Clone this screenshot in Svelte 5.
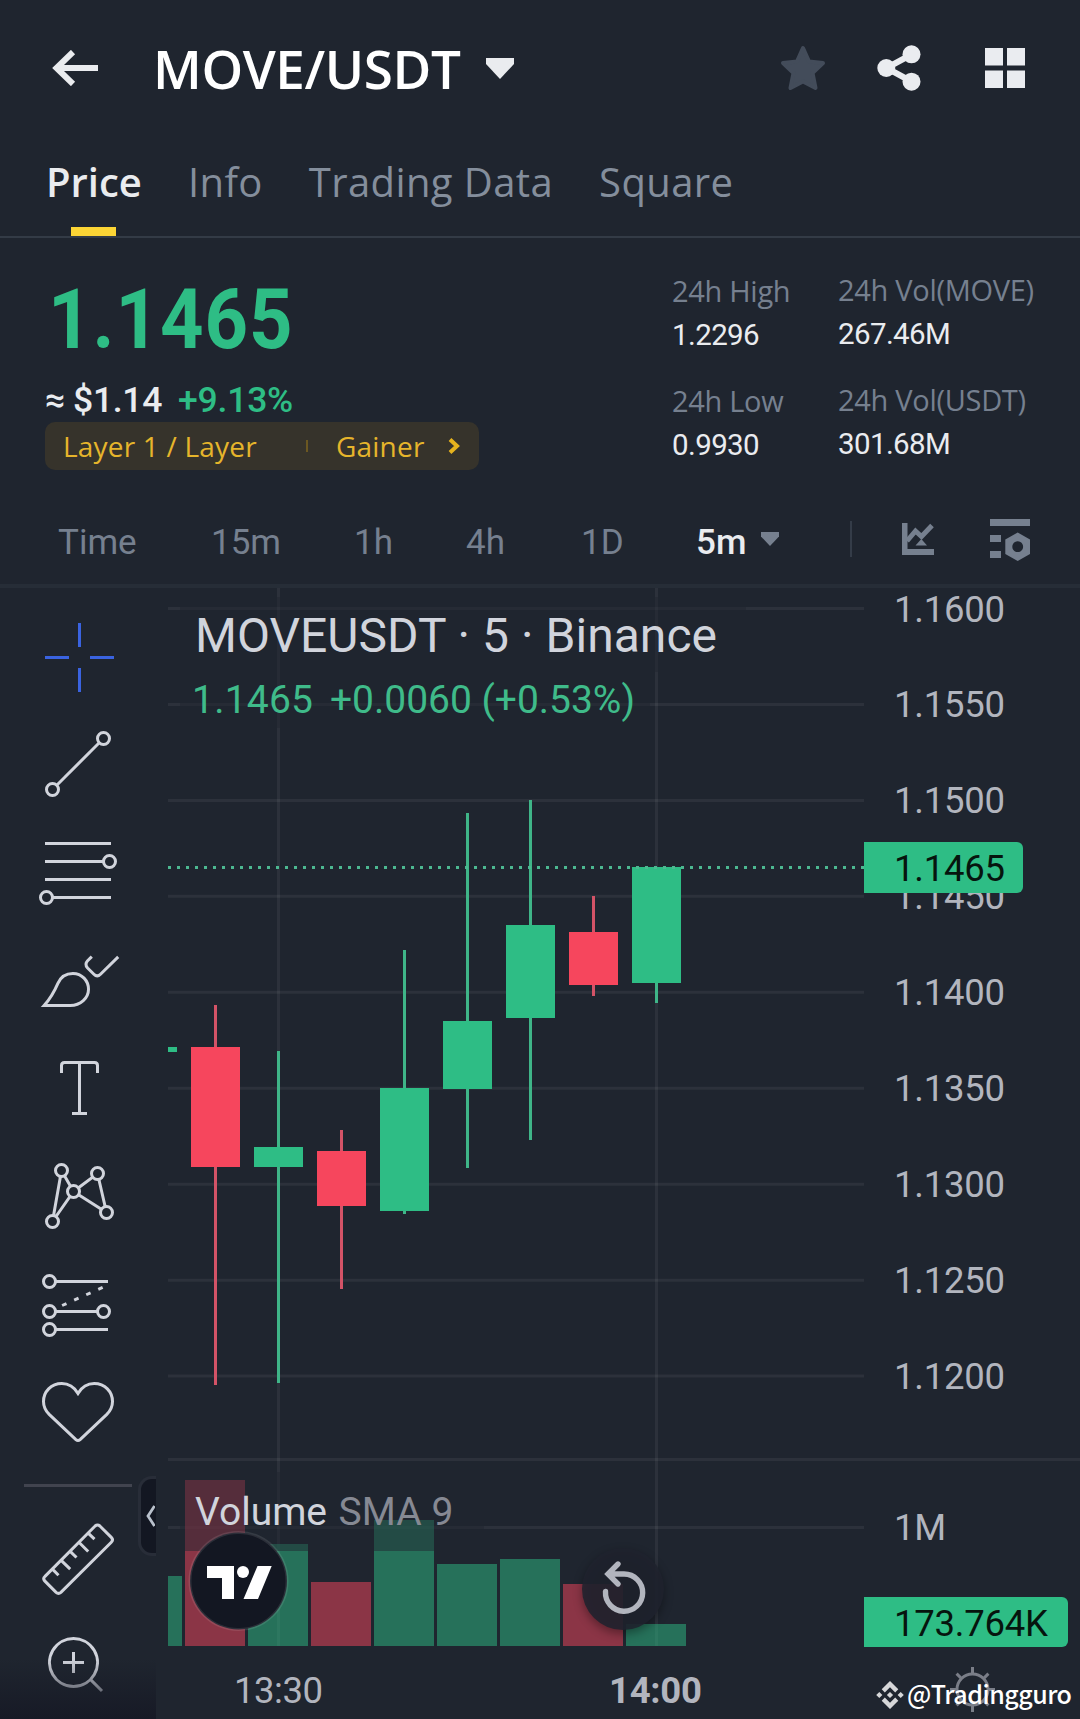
<script lang="ts">
  type Candle = { high: number; top: number; bottom: number; low: number; up: boolean; volume: number };

  const tabs = ['Price', 'Info', 'Trading Data', 'Square'];
  let activeTab = 'Price';

  const stats = [
    [
      { label: '24h High', value: '1.2296' },
      { label: '24h Low', value: '0.9930' }
    ],
    [
      { label: '24h Vol(MOVE)', value: '267.46M' },
      { label: '24h Vol(USDT)', value: '301.68M' }
    ]
  ];

  const intervals = ['Time', '15m', '1h', '4h', '1D'];

  const priceLabels = ['1.1600', '1.1550', '1.1500', '1.1450', '1.1400', '1.1350', '1.1300', '1.1250', '1.1200'];
  const gridTop = 608.5;
  const gridStep = 95.95;

  // y positions on the chart canvas
  const candles: Candle[] = [
    { high: 1005, top: 1047, bottom: 1167, low: 1385, up: false, volume: 1480 },
    { high: 1051, top: 1147, bottom: 1167, low: 1383, up: true, volume: 1544 },
    { high: 1130, top: 1151, bottom: 1206, low: 1289, up: false, volume: 1582 },
    { high: 950, top: 1088, bottom: 1211, low: 1214, up: true, volume: 1520 },
    { high: 813, top: 1021, bottom: 1089, low: 1168, up: true, volume: 1564 },
    { high: 800, top: 925, bottom: 1018, low: 1140, up: true, volume: 1559 },
    { high: 896, top: 932, bottom: 985, low: 996, up: false, volume: 1584 },
    { high: 867, top: 867, bottom: 983, low: 1003, up: true, volume: 1624 }
  ];
  const volumeBase = 1646;

  $: bars = candles.map((c, i) => ({ ...c, x: 215.5 + i * 63 }));

  // Drawing tools, 28x28 grid
  type Tool = { name: string; path: string; dots?: number[][]; dashed?: string };
  const tools: Tool[] = [
    { name: 'cross', path: 'M14.5 3v8M14.5 18v8M3 14.5h8M18 14.5h8' },
    { name: 'trend', path: 'M5.5 22.5l17-17', dots: [[5.5, 22.5], [22.5, 5.5]] },
    { name: 'fib', path: 'M3 4.5h22M3 10.5h21M3 16.5h22M4 22.5h21', dots: [[24.5, 10.5], [3.5, 22.5]] },
    {
      name: 'brush',
      path: 'M2.7 22.5C5.2 19.7 6.3 17.4 7.3 15.1C8.3 12.8 10.1 11.8 12.3 11.8C15.3 11.8 17.5 14.2 17.5 17.1C17.5 20 14.9 22.5 11.4 22.5ZM18.6 6.2L17.2 7.6Q16.1 8.8 17.2 10L19.3 12.1Q20.4 13.2 21.5 12.1L27.4 6.3'
    },
    { name: 'text', path: 'M8.5 9V6.5Q8.5 5.5 9.5 5.5H19.5Q20.5 5.5 20.5 6.5V9M14.5 5.5V22.5M12 22.5H17' },
    {
      name: 'pattern',
      path: 'M5.5 22.5L8.5 5.5L12.5 12.5L20.5 6.5L23.5 19.5L12.5 12.5Z',
      dots: [[8.5, 5.5], [20.5, 6.5], [12.5, 12.5], [5.5, 22.5], [23.5, 19.5]]
    },
    {
      name: 'forecast',
      path: 'M4.5 6.5H24M4.5 16.5H22.5M4.5 22.5H24',
      dots: [[4.5, 6.5], [4.5, 16.5], [22.5, 16.5], [4.5, 22.5]],
      dashed: 'M8.7 14.5L22.6 8.3'
    },
    {
      name: 'heart',
      path: 'M14 7.8C12.8 5.8 11 4.5 8.6 4.5C5 4.5 2.5 7.3 2.5 10.5C2.5 12.4 3.2 13.6 4.4 14.8L13.3 23.2Q14 23.8 14.7 23.2L23.6 14.8C24.8 13.6 25.5 12.4 25.5 10.5C25.5 7.3 23 4.5 19.4 4.5C17 4.5 15.2 5.8 14 7.8Z'
    }
  ];
  const lowerTools: Tool[] = [
    {
      name: 'ruler',
      path: 'M3 19.8L19.7 3Q20.5 2.3 21.3 3L25.1 6.8Q25.9 7.6 25.1 8.4L8.3 25.1Q7.5 25.8 6.7 25.1L2.9 21.3Q2.2 20.5 3 19.8ZM5.4 17.3l2.1 2.1M8.3 14.4l3.1 3M11.3 11.4l2.2 2.1M14.3 8.4l3.1 3.1M17.3 5.3l2.2 2.1'
    },
    { name: 'zoom', path: 'M12.5 4.5a8 8 0 1 0 .01 0ZM12.5 9v7M9 12.5h7M18.2 18.2l3.8 3.8' }
  ];
</script>

<div class="screen">
  <header class="header">
    <svg class="back" viewBox="0 0 46 36">
      <path d="M3.5 18H46M21 2L4.5 18L21 34" fill="none" stroke="#eaecef" stroke-width="6" />
    </svg>
    <h1 class="pair">MOVE/USDT</h1>
    <svg class="pair-arrow" viewBox="0 0 28 21"><path d="M0 0H28V6L14 21L0 6Z" fill="#eaecef" /></svg>

    <svg class="star" viewBox="0 0 46 46">
      <path
        d="M23 3L29 16.5L43 18L32.5 28L35.5 43L23 36.5L10.5 43L13.5 28L3 18L17 16.5Z"
        fill="#434c5a" stroke="#434c5a" stroke-width="4" stroke-linejoin="round"
      />
    </svg>
    <svg class="share" viewBox="0 0 44 46">
      <path d="M34.5 9.5L9.5 23L34.5 36.5" fill="none" stroke="#eaecf0" stroke-width="6" />
      <circle cx="34.5" cy="9.3" r="9" fill="#eaecf0" />
      <circle cx="9.3" cy="23" r="9" fill="#eaecf0" />
      <circle cx="34.5" cy="36.7" r="9" fill="#eaecf0" />
    </svg>
    <svg class="apps" viewBox="0 0 40 40">
      <path d="M0 0h18v17.5H0zM22 0h18v17.5H22zM0 22.5h18V40H0zM22 22.5h18V40H22z" fill="#eaecf0" />
    </svg>
  </header>

  <nav class="tabs">
    {#each tabs as tab}
      <button type="button" class="tab" class:active={tab === activeTab} on:click={() => (activeTab = tab)}>
        <span class="tab-label">{tab}</span>
        <span class="tab-line"></span>
      </button>
    {/each}
  </nav>

  <section class="ticker">
    <div class="quote">
      <div class="price">1.1465</div>
      <div class="fiat">
        <span class="approx">≈</span>
        <span class="usd">$1.14</span>
        <span class="change">+9.13%</span>
      </div>
      <div class="tags">
        <span class="tag-layer">Layer 1 / Layer</span>
        <span class="tag-divider"></span>
        <span class="tag-gainer">Gainer</span>
        <svg class="tag-chevron" viewBox="0 0 12 16">
          <path d="M2 1.5L9 8L2 14.5" fill="none" stroke="#e6b31e" stroke-width="4" />
        </svg>
      </div>
    </div>

    <div class="stats">
      {#each stats as column}
        <div class="stats-column">
          {#each column as stat}
            <div class="stat">
              <span class="stat-label">{stat.label}</span>
              <span class="stat-value">{stat.value}</span>
            </div>
          {/each}
        </div>
      {/each}
    </div>
  </section>

  <div class="intervals">
    {#each intervals as interval}
      <span class="interval">{interval}</span>
    {/each}
    <span class="interval selected">5m</span>
    <svg class="interval-arrow" viewBox="0 0 18 14"><path d="M0 0H18V4.5L9 14L0 4.5Z" fill="#76808f" /></svg>
    <span class="interval-divider"></span>
    <svg class="chart-type" viewBox="0 0 32 32" fill="#76808f">
      <path d="M0 0H5.5V26H32V32H0Z" />
      <path d="M5 18L13.5 8L19.5 13.5L30 2.5" fill="none" stroke="#76808f" stroke-width="5" />
      <path d="M13.5 22.5L19.3 16L25 22.5Z" />
    </svg>
    <svg class="chart-settings" viewBox="0 0 40 42" fill="#76808f">
      <path d="M0 0H40V7H0ZM0 16H11V23H0ZM0 32H11V39H0Z" />
      <path fill-rule="evenodd" d="M27.7 13.5L40 20.5V35L27.7 42L15.3 35V20.5ZM27.7 22.3a5.4 5.4 0 1 0 .01 0Z" />
    </svg>
  </div>

  <main class="chart">
    <aside class="toolbar">
      {#each tools as tool}
        <div class="tool {tool.name}">
          <svg viewBox="0 0 28 28">
            <path d={tool.path} />
            {#if tool.dashed}
              <path d={tool.dashed} stroke-dasharray="1.6 2.8" />
            {/if}
            {#each tool.dots ?? [] as [cx, cy]}
              <circle {cx} {cy} r="2" />
            {/each}
          </svg>
        </div>
      {/each}
      <div class="tool-divider"></div>
      {#each lowerTools as tool}
        <div class="tool {tool.name}">
          <svg viewBox="0 0 28 28"><path d={tool.path} /></svg>
        </div>
      {/each}
      <div class="toolbar-fade"></div>
      <div class="collapse">
        <svg viewBox="0 0 9 22"><path d="M8.5 1L2 11L8.5 21" fill="none" stroke="#b9c1cc" stroke-width="2.8" /></svg>
      </div>
    </aside>

    <svg class="canvas" viewBox="156 584 924 1135">
      <!-- Grid -->
      <g stroke="#ffffff" stroke-opacity="0.06" stroke-width="3">
        {#each priceLabels as _, i}
          <line x1="168" x2="864" y1={gridTop + i * gridStep} y2={gridTop + i * gridStep} />
        {/each}
        <line x1="168" x2="864" y1="1527.5" y2="1527.5" />
        <line x1="168" x2="1080" y1="1459.5" y2="1459.5" />
        <line x1="278.5" x2="278.5" y1="588" y2="1646" />
        <line x1="656.5" x2="656.5" y1="588" y2="1646" />
      </g>

      <!-- Volume -->
      <g opacity="0.5">
        <rect x="168" y="1576" width="14" height="70" class="up" />
        {#each bars as bar}
          <rect x={bar.x - 30.5} y={bar.volume} width="60" height={volumeBase - bar.volume} class={bar.up ? 'up' : 'down'} />
        {/each}
      </g>

      <!-- Candles -->
      <rect x="168" y="1047" width="9" height="5" class="up" />
      {#each bars as bar}
        <rect x={bar.x - 1.5} y={bar.high} width="3" height={bar.low - bar.high} class={bar.up ? 'wick-up' : 'wick-down'} />
        <rect x={bar.x - 24.5} y={bar.top} width="49" height={bar.bottom - bar.top} class={bar.up ? 'up' : 'down'} />
      {/each}

      <line x1="168" x2="864" y1="867.5" y2="867.5" stroke="#4cb891" stroke-width="3" stroke-dasharray="3 6" />

      <!-- Legend -->
      <g fill="#1f252f" fill-opacity="0.5">
        <rect x="180" y="597" width="566" height="75" />
        <rect x="180" y="672" width="470" height="56" />
        <rect x="180" y="1472" width="304" height="79" />
      </g>
      <text class="legend-title" x="195" y="652" textLength="522">MOVEUSDT · 5 · Binance</text>
      <text class="legend-value" x="192" y="713" textLength="121">1.1465</text>
      <text class="legend-value" x="330" y="713" textLength="305">+0.0060 (+0.53%)</text>
      <text class="legend-volume" x="195" y="1525" textLength="132">Volume</text>
      <text class="legend-sma" x="338.5" y="1525" textLength="115">SMA 9</text>

      <!-- Price scale -->
      {#each priceLabels as label, i}
        <text class="axis" x="894" y={gridTop + i * gridStep + 13} textLength="111">{label}</text>
      {/each}
      <text class="axis" x="894" y="1540" textLength="52">1M</text>
      <path d="M864 842H1017a6 6 0 0 1 6 6V887a6 6 0 0 1-6 6H864Z" class="up" />
      <text class="axis badge" x="894" y="881" textLength="111">1.1465</text>
      <path d="M864 1597H1062a6 6 0 0 1 6 6V1641a6 6 0 0 1-6 6H864Z" class="up" />
      <text class="axis badge" x="894" y="1636" textLength="154">173.764K</text>

      <!-- Time scale -->
      <text class="axis" x="234" y="1703" textLength="89">13:30</text>
      <text class="axis strong" x="609" y="1703" textLength="93">14:00</text>

      <!-- TradingView mark -->
      <circle cx="238.5" cy="1581" r="48.5" fill="#131722" stroke="#ffffff" stroke-opacity="0.1" stroke-width="3" />
      <path d="M207 1566H234V1599H222V1578H207ZM257.5 1566H271.7L258 1599H243.5Z" fill="#fff" />
      <circle cx="243" cy="1572" r="6" fill="#fff" />

      <!-- Reset -->
      <circle class="reset" cx="623" cy="1589" r="41" />
      <path
        d="M609 1574H624A18.6 18.6 0 1 1 605.5 1591.5M618 1564L608 1574L618 1584"
        fill="none" stroke="#b2b5be" stroke-width="5.4" stroke-linecap="round"
      />

      <!-- Theme toggle -->
      <g fill="none" stroke="#7a7e88" stroke-width="3">
        <circle cx="972.5" cy="1689.5" r="15.5" />
        {#each [0, 45, 90, 135, 180, 225, 270, 315] as angle}
          <line x1="972.5" x2="972.5" y1="1667" y2="1673" transform="rotate({angle} 972.5 1689.5)" />
        {/each}
      </g>

      <!-- Author -->
      <g fill="#d6d7d9">
        <path d="M890 1681L898.3 1689.3L895.2 1692.4L890 1687.2L884.8 1692.4L881.7 1689.3Z" />
        <path d="M890 1709L898.3 1700.7L895.2 1697.6L890 1702.8L884.8 1697.6L881.7 1700.7Z" />
        <path d="M890 1691.9l3.1 3.1l-3.1 3.1l-3.1-3.1ZM879.3 1691.9l3.1 3.1l-3.1 3.1l-3.1-3.1ZM900.7 1691.9l3.1 3.1l-3.1 3.1l-3.1-3.1Z" />
      </g>
      <text class="author" x="907" y="1704" textLength="165">@Tradingguro</text>
    </svg>
  </main>
</div>

<style>
  :global(body) {
    background: #1f252f;
  }

  .screen {
    width: 1080px;
    height: 1719px;
    overflow: hidden;
    background: #1f252f;
    color: #eaecef;
    font-family: Roboto, sans-serif;
  }

  svg {
    display: block;
    flex-shrink: 0;
  }

  /* Header */
  .header {
    display: flex;
    align-items: center;
    height: 136px;
    padding: 0 55px 0 52px;
    box-sizing: border-box;
  }

  .back {
    width: 46px;
    height: 36px;
  }

  .pair {
    margin: 2px 0 0 55px;
    width: 333px;
    font-family: 'Open Sans', sans-serif;
    font-size: 53px;
    font-weight: 650;
    line-height: 72px;
    letter-spacing: -0.4px;
    color: #fff;
  }

  .pair-arrow {
    width: 28px;
    height: 21px;
  }

  .star {
    width: 46px;
    height: 46px;
    margin-left: auto;
  }

  .share {
    width: 44px;
    height: 46px;
    margin: 0 64px 0 51px;
  }

  .apps {
    width: 40px;
    height: 40px;
  }

  /* Tabs */
  .tabs {
    display: flex;
    gap: 46px;
    height: 100px;
    padding-left: 46px;
    border-bottom: 2px solid #333b46;
  }

  .tab {
    display: flex;
    flex-direction: column;
    align-items: center;
    padding: 0;
    border: none;
    background: none;
    font-family: 'Open Sans', sans-serif;
    color: #848e9c;
  }

  .tab-label {
    font-size: 40px;
    font-weight: 500;
    line-height: 91px;
    letter-spacing: 0.4px;
    white-space: nowrap;
  }

  .tab-line {
    width: 45px;
    height: 9px;
  }

  .tab.active {
    color: #eaecef;
  }

  .tab.active .tab-label {
    font-weight: 600;
    letter-spacing: 0;
  }

  .tab.active .tab-line {
    background: #fcd535;
  }

  /* Ticker */
  .ticker {
    display: flex;
    justify-content: space-between;
    height: 246px;
    padding: 24px 40px 0 45px;
    box-sizing: border-box;
  }

  .price {
    margin-left: 3px;
    font-size: 83px;
    font-weight: 700;
    line-height: 116px;
    letter-spacing: 1px;
    transform: scaleX(0.915);
    transform-origin: left;
    color: #2ebd85;
  }

  .fiat {
    display: flex;
    height: 44px;
    font-size: 35.5px;
    font-weight: 500;
    line-height: 44px;
  }

  .approx {
    width: 28px;
  }

  .usd {
    width: 105px;
    letter-spacing: -0.3px;
  }

  .change {
    letter-spacing: -0.2px;
    color: #2ebd85;
  }

  .tags {
    display: flex;
    align-items: center;
    width: 434px;
    height: 48px;
    padding: 0 18px;
    box-sizing: border-box;
    border-radius: 10px;
    background: #36332b;
    font-family: 'Open Sans', sans-serif;
    font-size: 28px;
    letter-spacing: 0.2px;
    color: #e6b52b;
  }

  .tag-layer {
    width: 243px;
  }

  .tag-divider {
    width: 2px;
    height: 12px;
    background: #6b5721;
  }

  .tag-gainer {
    width: 112px;
    margin-left: 28px;
  }

  .tag-chevron {
    width: 12px;
    height: 16px;
  }

  .stats {
    display: flex;
    width: 368px;
    padding-top: 7px;
  }

  .stats-column {
    display: flex;
    flex-direction: column;
    gap: 22px;
    width: 166px;
    white-space: nowrap;
  }

  .stats-column:last-child {
    margin-top: -1.5px;
  }

  .stat {
    display: flex;
    flex-direction: column;
    line-height: 44px;
  }

  .stat-label {
    font-family: 'Open Sans', sans-serif;
    font-size: 29px;
    letter-spacing: -0.3px;
    color: #76808f;
  }

  .stat-value {
    font-size: 29.5px;
    letter-spacing: -0.6px;
  }

  /* Intervals */
  .intervals {
    display: grid;
    grid-template-columns: 153px 143px 112px 115px 115px 65px 89px 52px 88px 40px;
    align-items: center;
    height: 100px;
    padding: 16px 0 0 58px;
    box-sizing: border-box;
    font-size: 35px;
    color: #76808f;
  }

  .interval.selected {
    font-weight: 500;
    color: #eaecef;
  }

  .interval-arrow {
    width: 18px;
    height: 14px;
    margin-top: -6px;
  }

  .interval-divider {
    width: 2px;
    height: 36px;
    margin-top: -6px;
    background: #343c48;
  }

  .chart-type {
    width: 32px;
    height: 32px;
    margin-top: -6px;
  }

  .chart-settings {
    width: 40px;
    height: 42px;
    margin-top: -4px;
  }

  /* Chart */
  .chart {
    display: flex;
    width: 1080px;
    height: 1135px;
    box-sizing: border-box;
    box-shadow: inset 0 4px 0 #262d37;
  }

  .toolbar {
    position: relative;
    width: 156px;
    height: 1135px;
    padding-top: 18px;
    box-sizing: border-box;
    overflow: hidden;
  }

  .tool {
    height: 108px;
    padding: 12px 0 0 36px;
    box-sizing: border-box;
  }

  .tool svg {
    width: 84px;
    height: 84px;
    fill: none;
    stroke: #d1d4dc;
    stroke-width: 1;
    overflow: visible;
  }

  .tool circle {
    fill: #1f252f;
  }

  .tool.cross svg {
    stroke: #3a63e0;
  }

  .tool-divider {
    width: 108px;
    height: 3px;
    margin: 18px 0 18px 24px;
    background: #41444f;
  }

  .toolbar-fade {
    position: absolute;
    left: 0;
    right: 0;
    bottom: 0;
    height: 60px;
    background: linear-gradient(to bottom, rgba(23, 26, 38, 0), #171a26);
  }

  .collapse {
    position: absolute;
    top: 892px;
    right: 0;
    display: flex;
    align-items: center;
    width: 18px;
    height: 80px;
    padding-left: 5px;
    box-sizing: border-box;
    border: 3px solid #282d38;
    border-right: none;
    border-radius: 14px 0 0 14px;
    background: #131722;
  }

  .collapse svg {
    width: 9px;
    height: 22px;
  }

  .canvas {
    width: 924px;
    height: 1135px;
  }

  .up {
    fill: #2ebd85;
  }

  .down {
    fill: #f6465d;
  }

  .wick-up {
    fill: #3fb588;
  }

  .wick-down {
    fill: #d35367;
  }

  .legend-title {
    font-size: 48px;
    fill: #d1d4dc;
  }

  .legend-value {
    font-size: 39px;
    fill: #3fbb8a;
  }

  .legend-volume {
    font-size: 39px;
    fill: #d1d4dc;
  }

  .legend-sma {
    font-size: 39px;
    fill: #868993;
  }

  .axis {
    font-size: 36.5px;
    fill: #b2b5be;
  }

  .axis.strong {
    font-weight: 700;
  }

  .axis.badge {
    fill: #06150e;
  }

  .reset {
    fill: #1f222d;
    fill-opacity: 0.88;
    filter: drop-shadow(0 4px 5px rgba(0, 0, 0, 0.4));
  }

  .author {
    font-family: 'Noto Sans CJK SC', sans-serif;
    font-size: 25px;
    font-weight: 500;
    fill: #fff;
  }
</style>
